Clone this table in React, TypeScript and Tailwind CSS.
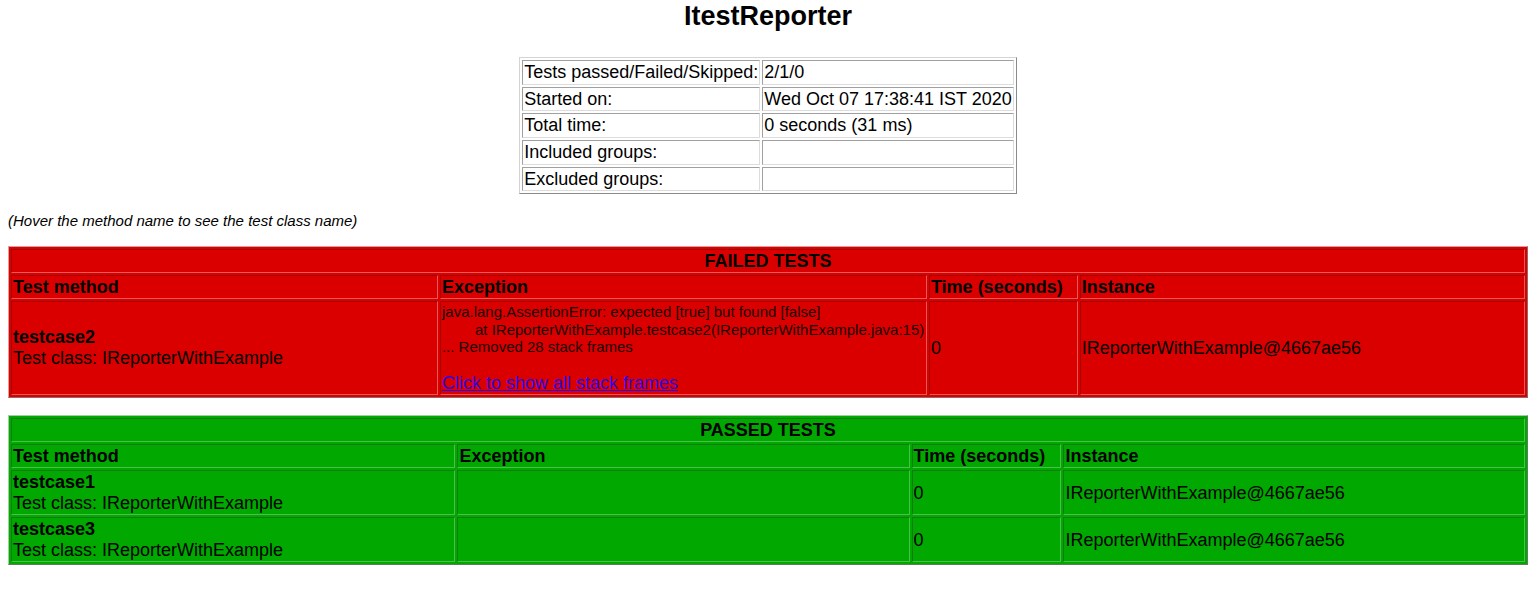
const summaryRows = [
  ['Tests passed/Failed/Skipped:', '2/1/0'],
  ['Started on:', 'Wed Oct 07 17:38:41 IST 2020'],
  ['Total time:', '0 seconds (31 ms)'],
  ['Included groups:', ''],
  ['Excluded groups:', ''],
]

const passedRows = ['testcase1', 'testcase3']

const grayCell =
  'border border-t-[#a0a0a0] border-l-[#a0a0a0] border-b-[#dcdcdc] border-r-[#dcdcdc] p-px font-normal'
const redCell =
  'border border-t-[#a30000] border-l-[#a30000] border-b-[#e85a5a] border-r-[#e85a5a] p-px'
const greenCell =
  'border border-t-[#117a11] border-l-[#117a11] border-b-[#4cc04c] border-r-[#4cc04c] p-px'

export default function App() {
  return (
    <div className="min-h-screen bg-white px-2 pt-px pb-6 font-['Liberation_Sans',Arial,sans-serif] text-[18px] leading-[1.15] text-black">
      <h2 className="text-center text-[27px] font-bold leading-[31px]">ItestReporter</h2>

      <table className="mx-auto mt-[25px] border border-separate border-spacing-[2px] border-t-[#d4d4d4] border-l-[#d4d4d4] border-b-[#8a8a8a] border-r-[#8a8a8a]">
        <tbody>
          {summaryRows.map(([label, value]) => (
            <tr key={label}>
              <th className={`${grayCell} text-left`}>{label}</th>
              <td className={grayCell}>{value}</td>
            </tr>
          ))}
        </tbody>
      </table>

      <p className="mt-[18px] text-[15px] italic leading-[17px]">
        (Hover the method name to see the test class name)
      </p>

      {/* failed tests */}
      <table className="mt-[17px] w-full border border-separate border-spacing-[2px] border-t-[#d9a0a0] border-l-[#d9a0a0] border-b-[#8a6a6a] border-r-[#8a6a6a] bg-[#db0000] leading-[20px]">
        <thead>
          <tr>
            <th colSpan={4} className={`${redCell} text-center`}>FAILED TESTS</th>
          </tr>
          <tr>
            <th className={`${redCell} w-[428px] text-left`}>Test method</th>
            <th className={`${redCell} w-[487px] text-left`}>Exception</th>
            <th className={`${redCell} w-[149px] text-left`}>Time (seconds)</th>
            <th className={`${redCell} w-[446px] text-left`}>Instance</th>
          </tr>
        </thead>
        <tbody>
          <tr>
            <td className={`${redCell} align-middle leading-[21px]`}>
              <b>testcase2</b>
              <br />
              Test class: IReporterWithExample
            </td>
            <td className={`${redCell} align-top leading-[20.7px]`}>
              <div className="text-[15px] leading-[17.3px] text-[#1a0000]">
                <div>java.lang.AssertionError: expected [true] but found [false]</div>
                <div className="whitespace-nowrap pl-[33px]">at IReporterWithExample.testcase2(IReporterWithExample.java:15)</div>
                <div>... Removed 28 stack frames</div>
                <div>&nbsp;</div>
              </div>
              <a href="#" className="text-[#2a00e6] underline">
                Click to show all stack frames
              </a>
            </td>
            <td className={`${redCell} align-middle`}>0</td>
            <td className={`${redCell} align-middle`}>IReporterWithExample@4667ae56</td>
          </tr>
        </tbody>
      </table>

      {/* passed tests */}
      <table className="mt-[17px] w-full border border-separate border-spacing-[2px] border-t-[#a0d0a0] border-l-[#a0d0a0] border-b-[#5a805a] border-r-[#5a805a] bg-[#00a800] leading-[20px]">
        <thead>
          <tr>
            <th colSpan={4} className={`${greenCell} text-center`}>PASSED TESTS</th>
          </tr>
          <tr>
            <th className={`${greenCell} w-[445px] text-left`}>Test method</th>
            <th className={`${greenCell} w-[453px] text-left`}>Exception</th>
            <th className={`${greenCell} w-[150px] text-left`}>Time (seconds)</th>
            <th className={`${greenCell} w-[462px] text-left`}>Instance</th>
          </tr>
        </thead>
        <tbody>
          {passedRows.map((name) => (
            <tr key={name}>
              <td className={`${greenCell} leading-[20.5px]`}>
                <b>{name}</b>
                <br />
                Test class: IReporterWithExample
              </td>
              <td className={greenCell}></td>
              <td className={greenCell}>0</td>
              <td className={greenCell}>IReporterWithExample@4667ae56</td>
            </tr>
          ))}
        </tbody>
      </table>
    </div>
  )
}
